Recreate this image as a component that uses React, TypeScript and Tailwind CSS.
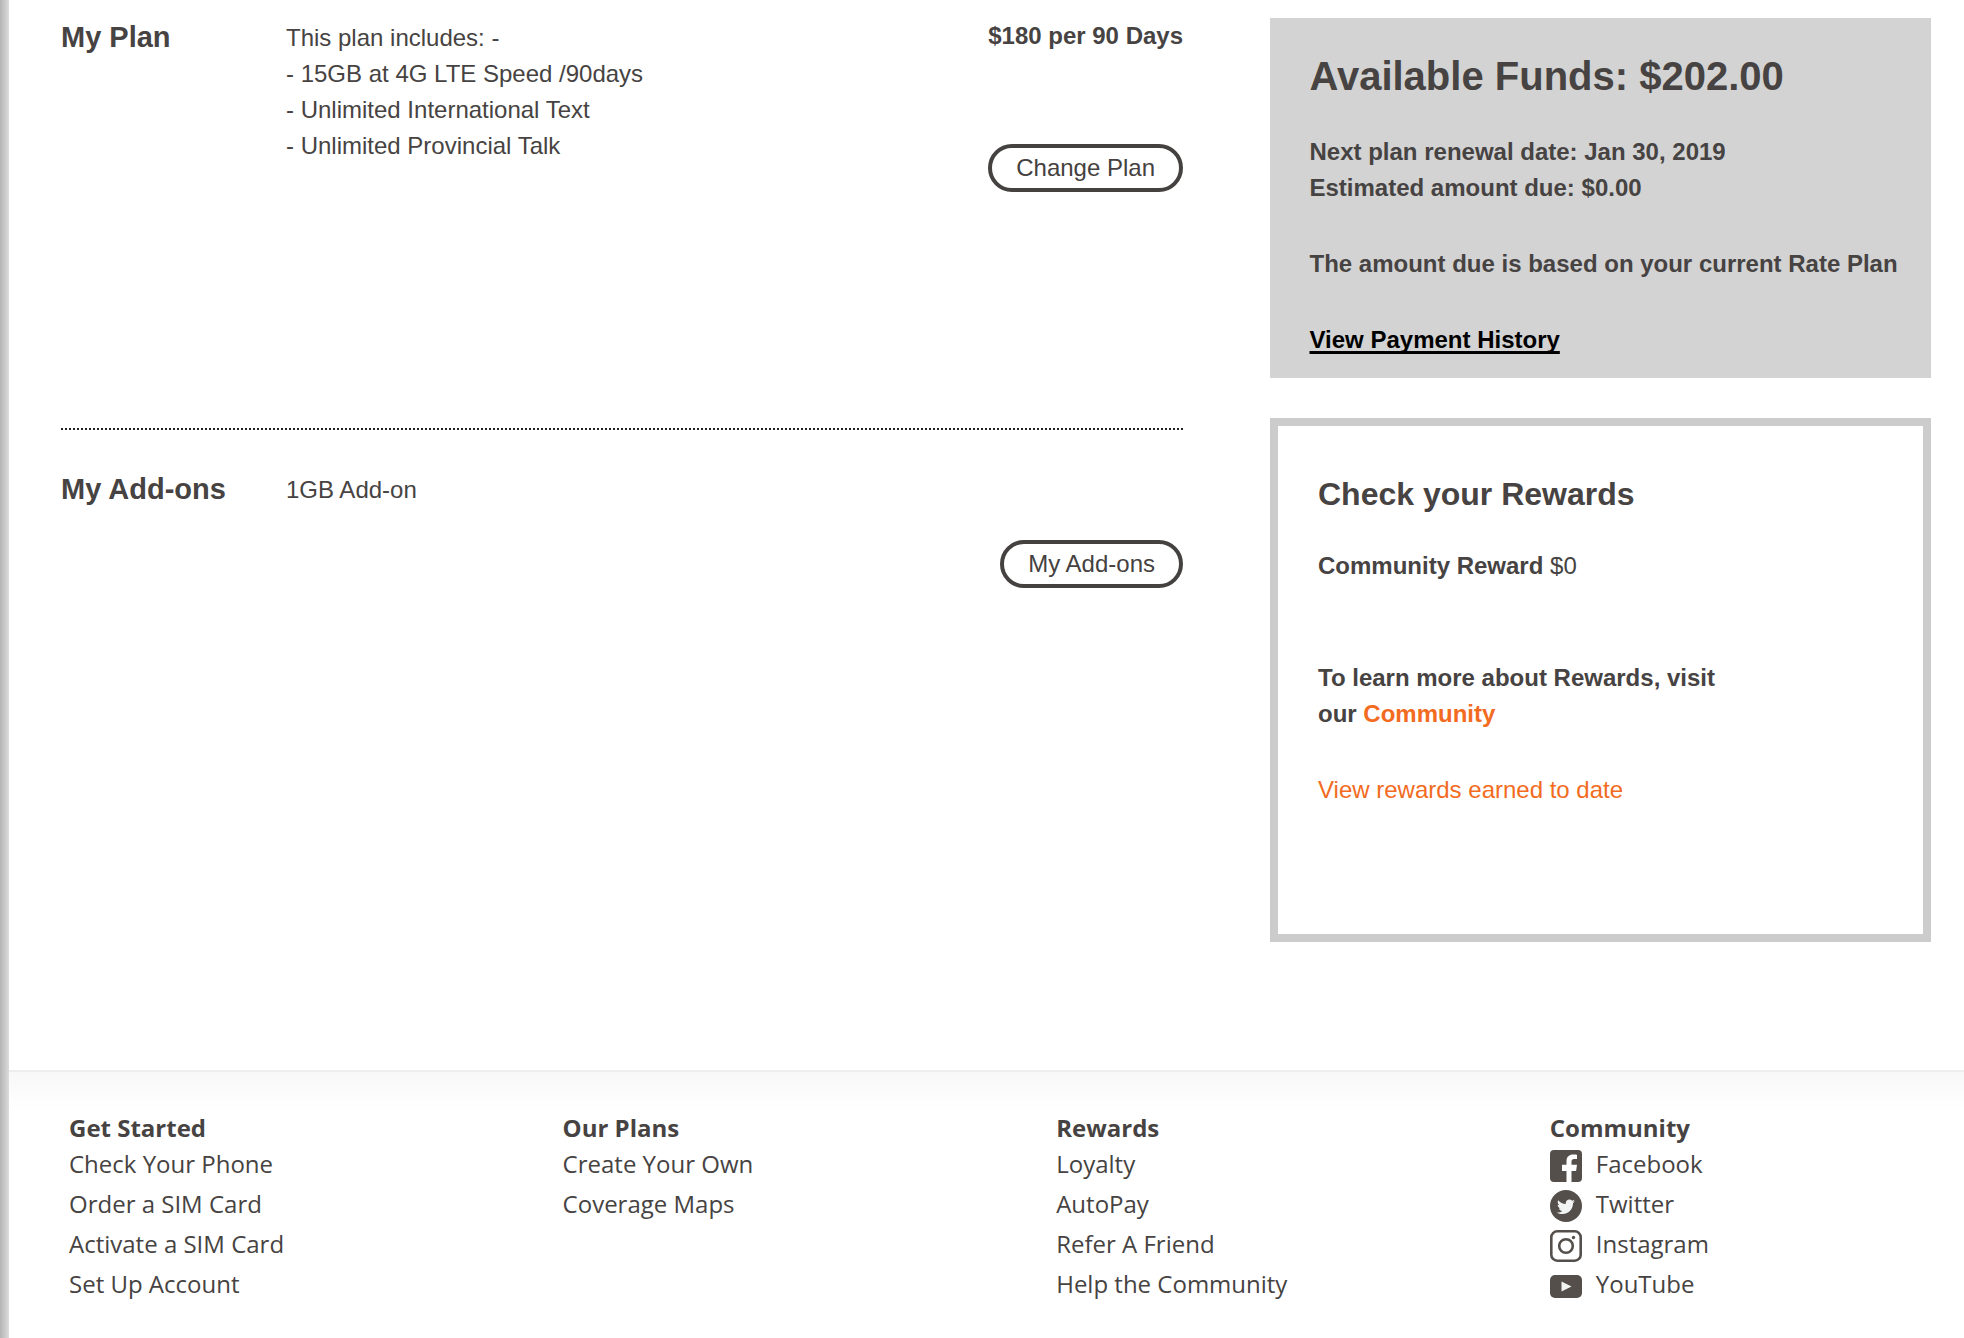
const arial = "font-['Liberation_Sans',Arial,sans-serif]"
const open = "font-['Open_Sans',sans-serif]"

const footerCols = [
  { title: "Get Started", links: ["Check Your Phone", "Order a SIM Card", "Activate a SIM Card", "Set Up Account"] },
  { title: "Our Plans", links: ["Create Your Own", "Coverage Maps"] },
  { title: "Rewards", links: ["Loyalty", "AutoPay", "Refer A Friend", "Help the Community"] },
]

function FacebookIcon() {
  return (
    <svg width="32" height="32" viewBox="0 0 32 32" className="mt-[4px] shrink-0">
      <path
        fill="#544f4b"
        d="M4 0h24a4 4 0 0 1 4 4v24a4 4 0 0 1-4 4h-6.500V21h4.600l.9-6.200h-5.500v-3c0-1.700.6-2.800 2.800-2.800H27V4.800c-.6-.1-2.200-.2-3.800-.2-3.900 0-6.700 2.300-6.700 6.500v3.700H12V21h4.500v11H4a4 4 0 0 1-4-4V4a4 4 0 0 1 4-4z"
      />
    </svg>
  )
}

function TwitterIcon() {
  return (
    <svg width="32" height="32" viewBox="0 0 32 32" className="mt-[4px] shrink-0">
      <circle cx="16" cy="16" r="16" fill="#544f4b" />
      <path
        fill="#f2f4f4"
        transform="translate(1.600 2) scale(0.9)"
        d="M26 10.300c-.7.300-1.500.6-2.400.7.900-.5 1.500-1.300 1.800-2.300-.8.500-1.700.8-2.600 1-.8-.8-1.800-1.300-3-1.300-2.300 0-4.100 1.800-4.100 4.100 0 .3 0 .6.100.9-3.400-.2-6.400-1.800-8.400-4.300-.4.600-.6 1.300-.6 2.100 0 1.400.7 2.700 1.800 3.400-.7 0-1.300-.2-1.900-.5v.1c0 2 1.400 3.600 3.300 4-.3.100-.7.100-1.100.1-.3 0-.5 0-.8-.1.500 1.600 2 2.800 3.800 2.800-1.400 1.100-3.200 1.800-5.100 1.800-.3 0-.7 0-1-.1 1.800 1.200 4 1.800 6.300 1.800 7.500 0 11.700-6.200 11.700-11.700v-.5c.9-.5 1.600-1.200 2.200-2z"
      />
    </svg>
  )
}

function InstagramIcon() {
  return (
    <svg width="32" height="32" viewBox="0 0 32 32" fill="none" className="mt-[4px] shrink-0">
      <rect x="1.300" y="1.300" width="29.400" height="29.400" rx="6" stroke="#544f4b" strokeWidth="2.600" />
      <circle cx="16" cy="16" r="6.800" stroke="#544f4b" strokeWidth="2.600" />
      <circle cx="23.500" cy="7.500" r="1.700" fill="#544f4b" />
    </svg>
  )
}

function YoutubeIcon() {
  return (
    <svg width="32" height="23" viewBox="0 0 32 23" className="mt-[4px] shrink-0">
      <rect width="32" height="23" rx="5" fill="#544f4b" />
      <path d="M11.500 6.500v10l10-5z" fill="#f2f4f4" />
    </svg>
  )
}

const social = [
  { name: "Facebook", icon: <FacebookIcon /> },
  { name: "Twitter", icon: <TwitterIcon /> },
  { name: "Instagram", icon: <InstagramIcon /> },
  { name: "YouTube", icon: <YoutubeIcon /> },
]

function PillButton({ label }: { label: string }) {
  return (
    <button className="h-[48px] rounded-full border-[4px] border-[#444140] bg-white px-[24px] text-[24px] leading-none text-[#444140]">
      {label}
    </button>
  )
}

export default function App() {
  return (
    <div className={`flex h-[1338px] w-full overflow-hidden bg-white text-[#464342] ${arial}`}>
      <div className="w-[9px] shrink-0 bg-gradient-to-r from-[#b4b4b4] to-[#dcdcdc]" />

      <div className="flex min-w-0 flex-1 flex-col">
        <main className="flex h-[1070px] pl-[52px] pt-[18px]">
          <div className="w-[1122px] shrink-0">
            <section className="flex h-[412px] flex-col border-b-2 border-dotted border-[#222]">
              <div className="flex">
                <h2 className="w-[224px] shrink-0 pt-[1px] text-[29px] font-bold leading-[36px]">My Plan</h2>
                <div className="flex-1 pl-[1px] pt-[2px] text-[24px] leading-[36px]">
                  <p>This plan includes: -</p>
                  <p>- 15GB at 4G LTE Speed /90days</p>
                  <p>- Unlimited International Text</p>
                  <p>- Unlimited Provincial Talk</p>
                </div>
                <div className="flex flex-col items-end">
                  <p className="text-[24px] font-bold leading-[36px]">$180 per 90 Days</p>
                  <div className="mt-[90px]">
                    <PillButton label="Change Plan" />
                  </div>
                </div>
              </div>
            </section>

            <section className="pt-[41px]">
              <div className="flex">
                <h2 className="w-[224px] shrink-0 text-[29px] font-bold leading-[36px]">My Add-ons</h2>
                <p className="pl-[1px] pt-[1px] text-[24px] leading-[36px]">1GB Add-on</p>
              </div>
              <div className="mt-[32px] flex justify-end">
                <PillButton label="My Add-ons" />
              </div>
            </section>
          </div>

          <aside className="ml-[87px] w-[661px] shrink-0">
            <div className="h-[360px] bg-[#d3d3d3] pl-[39.500px] pr-[10px] pt-[32px]">
              <h1 className="text-[40px] font-bold leading-[52px]">Available Funds: $202.00</h1>
              <p className="mt-[32px] text-[24px] font-bold leading-[36px]">Next plan renewal date: Jan 30, 2019</p>
              <p className="text-[24px] font-bold leading-[36px]">Estimated amount due: $0.00</p>
              <p className="mt-[40px] text-[24px] font-bold leading-[36px]">
                The amount due is based on your current Rate Plan
              </p>
              <a className="mt-[43px] block w-fit text-[24px] font-bold leading-[30px] text-black underline decoration-[3px] underline-offset-[3px] [text-decoration-skip-ink:none]">
                View Payment History
              </a>
            </div>

            <div className="mt-[40px] h-[524px] border-[8px] border-[#cccccc] bg-white px-[40px] pt-[46px]">
              <h2 className="text-[32px] font-bold leading-[44px]">Check your Rewards</h2>
              <p className="mt-[32px] text-[24px] leading-[36px]">
                <b>Community Reward</b> $0
              </p>
              <p className="mt-[76px] text-[24px] font-bold leading-[36px]">
                To learn more about Rewards, visit
                <br />
                our <span className="text-[#f26b21]">Community</span>
              </p>
              <a className="mt-[40px] block text-[24px] leading-[36px] text-[#f26b21]">View rewards earned to date</a>
            </div>
          </aside>
        </main>

        <footer className={`flex-1 border-t-2 border-[#eeeeee] bg-gradient-to-b from-[#f8f8f8] to-white to-[40px] pl-[60px] pt-[39px] text-[24px] text-[#464342] ${open}`}>
          <div className="flex">
            {footerCols.map((col) => (
              <div key={col.title} className="w-[493.600px] shrink-0">
                <p className="font-bold leading-[33px]">{col.title}</p>
                {col.links.map((l) => (
                  <p key={l} className="leading-[40px]">
                    {l}
                  </p>
                ))}
              </div>
            ))}
            <div>
              <p className="font-bold leading-[33px]">Community</p>
              {social.map((s) => (
                <div key={s.name} className="flex h-[40px] items-center gap-[14px]">
                  {s.icon}
                  <span>{s.name}</span>
                </div>
              ))}
            </div>
          </div>
        </footer>
      </div>
    </div>
  )
}
